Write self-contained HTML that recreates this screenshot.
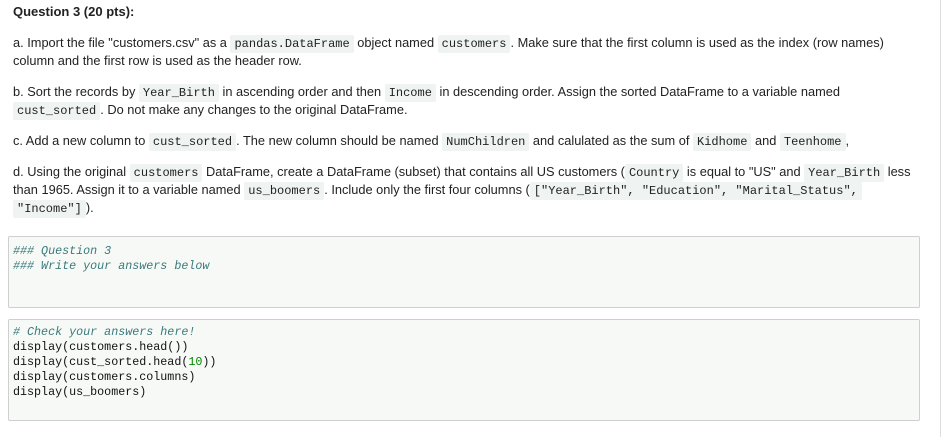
<!DOCTYPE html>
<html><head><meta charset="utf-8"><style>
body{margin:0;width:941px;height:437px;background:#fff;position:relative;overflow:hidden;font-family:"Liberation Sans",sans-serif;color:#222;}
.l{position:absolute;left:13px;white-space:nowrap;font-size:12.8px;line-height:16px;}
code{font-family:"Liberation Mono",monospace;font-size:12px;background:#eff3f2;padding:2px 4px;border-radius:2px;color:#222;}
.cell{position:absolute;left:8px;width:910px;background:#f7f9f7;border:1px solid #cfcfcf;border-radius:2px;}
.c{position:absolute;left:13px;white-space:pre;font-family:"Liberation Mono",monospace;font-size:11.7px;line-height:15px;color:#111;}
.cm{color:#3a7a7a;font-style:italic;}
.n{color:#080;}
</style></head><body>
<div style="position:absolute;right:0;top:0;width:1px;height:437px;background:#ddd"></div>
<div class="l" style="top:4px;font-weight:bold;font-size:13px">Question 3 (20 pts):</div>
<div class="l" style="top:35px">a. Import the file "customers.csv" as a <code>pandas.DataFrame</code> object named <code>customers</code>. Make sure that the first column is used as the index (row names)</div>
<div class="l" style="top:53px">column and the first row is used as the header row.</div>
<div class="l" style="top:84px">b. Sort the records by <code>Year_Birth</code> in ascending order and then <code>Income</code> in descending order. Assign the sorted DataFrame to a variable named</div>
<div class="l" style="top:102px"><code>cust_sorted</code>. Do not make any changes to the original DataFrame.</div>
<div class="l" style="top:133px">c. Add a new column to <code>cust_sorted</code>. The new column should be named <code>NumChildren</code> and calulated as the sum of <code>Kidhome</code> and <code>Teenhome</code>,</div>
<div class="l" style="top:164px">d. Using the original <code>customers</code> DataFrame, create a DataFrame (subset) that contains all US customers (<code>Country</code> is equal to "US" and <code>Year_Birth</code> less</div>
<div class="l" style="top:182px">than 1965. Assign it to a variable named <code>us_boomers</code>. Include only the first four columns (<code>["Year_Birth", "Education", "Marital_Status",</code></div>
<div class="l" style="top:200px"><code>"Income"]</code>).</div>
<div class="cell" style="top:236px;height:70px"></div>
<div class="c cm" style="top:244px">### Question 3
### Write your answers below</div>
<div class="cell" style="top:319px;height:100px"></div>
<div class="c" style="top:325px"><span class="cm"># Check your answers here!</span>
display(customers.head())
display(cust_sorted.head(<span class="n">10</span>))
display(customers.columns)
display(us_boomers)</div>
</body></html>
